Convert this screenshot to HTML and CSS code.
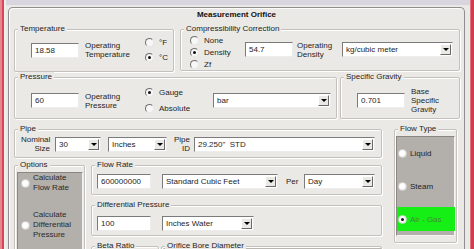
FILE: index.html
```html
<!DOCTYPE html>
<html lang="en">
<head>
  <meta charset="UTF-8">
  <title>Measurement Orifice</title>
  <link rel="stylesheet" href="styles.css">
</head>
<body>

  <div class="screen">
    <div class="edge-l"></div>

    <div class="middle">
      <div class="strip"></div>

      <div class="frame">
        <div class="title">Measurement Orifice</div>

        <div class="row row1">
          <div class="group g-temp">
            <div class="cap">Temperature</div>
            <div class="body">
              <div class="inp w48">18.58</div>
              <div class="desc d-temp">Operating<br>Temperature</div>
              <div class="radios r15">
                <div class="radio"><span class="rb"></span>°F</div>
                <div class="radio"><span class="rb on"></span>°C</div>
              </div>
            </div>
          </div>

          <div class="group g-comp">
            <div class="cap">Compressibility Correction</div>
            <div class="body">
              <div class="radios r12">
                <div class="radio"><span class="rb"></span>None</div>
                <div class="radio"><span class="rb on"></span>Density</div>
                <div class="radio"><span class="rb"></span>Zf</div>
              </div>
              <div class="fields">
                <div class="inp w48">54.7</div>
                <div class="desc d-dens">Operating<br>Density</div>
                <div class="sel s-dens"><span class="val">kg/cubic meter</span><span class="btn"></span></div>
              </div>
            </div>
          </div>
        </div>

        <div class="row row2">
          <div class="group g-pres">
            <div class="cap">Pressure</div>
            <div class="body">
              <div class="inp w48">60</div>
              <div class="desc d-pres">Operating<br>Pressure</div>
              <div class="radios r16">
                <div class="radio"><span class="rb on"></span>Gauge</div>
                <div class="radio"><span class="rb"></span>Absolute</div>
              </div>
              <div class="sel s-bar"><span class="val">bar</span><span class="btn"></span></div>
            </div>
          </div>

          <div class="group g-sg">
            <div class="cap">Specific Gravity</div>
            <div class="body">
              <div class="inp w48">0.701</div>
              <div class="desc d-sg">Base<br>Specific<br>Gravity</div>
            </div>
          </div>
        </div>

        <div class="row row3">
          <div class="left-col">
            <div class="group g-pipe">
              <div class="cap">Pipe</div>
              <div class="body">
                <div class="desc-r d-size">Nominal<br>Size</div>
                <div class="sel s-size"><span class="val">30</span><span class="btn"></span></div>
                <div class="sel s-unit"><span class="val">Inches</span><span class="btn"></span></div>
                <div class="desc-r d-id">Pipe<br>ID</div>
                <div class="sel s-id"><span class="val">29.250&quot;  STD</span><span class="btn"></span></div>
              </div>
            </div>

            <div class="lower">
              <div class="group g-opt">
                <div class="cap">Options</div>
                <div class="panel opt-panel">
                  <div class="opt-item"><span class="rb ball"></span><span>Calculate<br>Flow Rate</span></div>
                  <div class="opt-item opt-2"><span class="rb ball"></span><span>Calculate<br>Differential<br>Pressure</span></div>
                </div>
              </div>

              <div class="right-col">
                <div class="group g-rate">
                  <div class="cap">Flow Rate</div>
                  <div class="body">
                    <div class="inp w54">600000000</div>
                    <div class="sel s-std"><span class="val">Standard Cubic Feet</span><span class="btn"></span></div>
                    <div class="per">Per</div>
                    <div class="sel s-day"><span class="val">Day</span><span class="btn"></span></div>
                  </div>
                </div>

                <div class="group g-diff">
                  <div class="cap">Differential Pressure</div>
                  <div class="body">
                    <div class="inp w54">100</div>
                    <div class="sel s-water"><span class="val">Inches Water</span><span class="btn"></span></div>
                  </div>
                </div>

                <div class="row row4">
                  <div class="group g-beta">
                    <div class="cap">Beta Ratio</div>
                  </div>
                  <div class="group g-bore">
                    <div class="cap">Orifice Bore Diameter</div>
                  </div>
                </div>
              </div>
            </div>
          </div>

          <div class="group g-flow">
            <div class="cap">Flow Type</div>
            <div class="panel ft-panel">
              <div class="ft-item ft-1"><span class="rb ball"></span>Liquid</div>
              <div class="ft-item ft-2"><span class="rb ball"></span>Steam</div>
              <div class="ft-item ft-gas"><span class="rb ball on"></span>Air - Gas</div>
            </div>
          </div>
        </div>
      </div>
    </div>

    <div class="edge-r"></div>
  </div>

</body>
</html>
```

FILE: styles.css
```css
body {
  margin: 0;
  font-family: "Liberation Sans", Arial, sans-serif;
  font-size: 8px;
  color: #1e1e1e;
  background: #ebe9e5;
}
.screen {
  display: flex;
  width: 474px;
  height: 249px;
  overflow: hidden;
}
.edge-l {
  width: 6px;
  flex: none;
  background: linear-gradient(90deg, #e8868f 0 2px, #d6475a 2px 4px, #f4eeee 4px 6px);
}
.edge-r {
  width: 4px;
  flex: none;
  background: linear-gradient(90deg, #e3707d 0 1px, #d23d4e 1px);
}
.middle {
  width: 464px;
  flex: none;
}
.strip {
  height: 5px;
  background: #d8d5df;
}
.frame {
  margin: 2px 5px 0 2px;
  height: 260px;
  border: 1px solid #8e8e8e;
  border-bottom: none;
  border-radius: 5px 5px 0 0;
  box-shadow: inset 1px 1px 0 #fbfbfb;
  padding-left: 5px;
}
.title {
  margin-top: 2px;
  margin-left: -5px;
  line-height: 10px;
  text-align: center;
  font-weight: bold;
  color: #111;
}
.row {
  display: flex;
  align-items: flex-start;
}
.row1 { margin-top: 9px; }
.row2 { margin-top: 5px; }
.row3 { margin-top: 10px; }
.row4 { margin-top: 10px; }

/* group boxes */
.group {
  box-sizing: border-box;
  border: 1px solid #c4c1bc;
  border-radius: 2px;
  box-shadow: inset 1px 1px 0 #fff, 1px 1px 0 #fff;
  flex: none;
}
.cap {
  display: table;
  margin: -6px 0 0 3px;
  padding: 0 2px;
  line-height: 10px;
  background: #ebe9e5;
  white-space: nowrap;
}
.body {
  display: flex;
  align-items: center;
}

.g-temp { width: 160px; height: 43px; }
.g-temp .body { margin-top: 2px; height: 28px; padding-left: 16px; }
.g-comp { width: 280px; height: 42px; margin-left: 6px; }
.g-comp .body { align-items: flex-start; padding-left: 9px; }
.g-comp .radios { width: 55px; }
.fields {
  display: flex;
  align-items: center;
  height: 15px;
  margin-top: 8px;
}
.g-pres { width: 323px; height: 42px; }
.g-pres .body { margin-top: 1px; height: 35px; padding-left: 16px; }
.g-pres .radios { width: 68px; }
.g-sg { width: 120px; height: 42px; margin-left: 3px; }
.g-sg .body { margin-top: 1px; height: 35px; padding-left: 16px; }

.left-col { width: 368px; flex: none; }
.g-pipe { width: 368px; height: 29px; }
.g-pipe .body { height: 20px; padding-left: 6px; }
.lower {
  display: flex;
  align-items: flex-start;
  margin-top: 7px;
}
.g-opt { width: 71px; height: 100px; }
.right-col { width: 291px; margin-left: 6px; flex: none; }
.g-rate { width: 291px; height: 30px; }
.g-rate .body { margin-top: 4px; height: 15px; padding-left: 5px; }
.g-diff { width: 291px; height: 31px; margin-top: 10px; }
.g-diff .body { margin-top: 6px; height: 15px; padding-left: 5px; }
.g-beta { width: 68px; height: 40px; }
.g-bore {
  width: 221px;
  height: 40px;
  margin-left: 2px;
  background: #b9b6b2;
}
.g-flow { width: 63px; height: 114px; margin-left: 12px; }

/* text blocks */
.desc {
  line-height: 9px;
  margin-left: 6px;
  flex: none;
}
.d-temp { width: 56px; }
.d-dens { width: 45px; margin-left: 4px; }
.d-pres { width: 56px; }
.desc-r {
  line-height: 9px;
  text-align: right;
  flex: none;
}
.d-size { width: 29px; margin-right: 5px; }
.d-id { width: 17px; margin: 0 4px 0 6px; }
.per { width: 18px; margin-left: 8px; }

/* inputs and selects */
.inp {
  box-sizing: border-box;
  height: 15px;
  padding-left: 3px;
  line-height: 13px;
  background: #fff;
  border: 1px solid;
  border-color: #7b7b7b #ececec #ececec #7b7b7b;
  flex: none;
}
.w48 { width: 48px; }
.w54 { width: 54px; }
.sel {
  box-sizing: border-box;
  display: flex;
  height: 15px;
  background: #fff;
  border: 1px solid;
  border-color: #7b7b7b #ececec #ececec #7b7b7b;
  flex: none;
}
.sel .val {
  flex: 1;
  padding-left: 3px;
  line-height: 13px;
  white-space: pre;
  overflow: hidden;
}
.sel .btn {
  box-sizing: border-box;
  width: 11px;
  margin: 1px;
  display: flex;
  align-items: center;
  justify-content: center;
  background: #ebe9e5;
  border: 1px solid;
  border-color: #fff #6a6a6a #6a6a6a #fff;
}
.sel .btn::after {
  content: "";
  border-left: 3px solid transparent;
  border-right: 3px solid transparent;
  border-top: 3px solid #000;
}
.s-dens { width: 111px; }
.s-bar { width: 118px; }
.s-size { width: 46px; }
.s-unit { width: 59px; margin-left: 7px; }
.s-id { width: 181px; }
.s-std { width: 116px; margin-left: 11px; }
.s-day { width: 71px; }
.s-water { width: 92px; margin-left: 11px; }

/* radios */
.radios {
  display: flex;
  flex-direction: column;
  flex: none;
}
.radio {
  display: flex;
  align-items: center;
  white-space: nowrap;
}
.r12 .radio { height: 12px; }
.r15 .radio { height: 15px; }
.r16 .radio { height: 16px; }
.r15, .r16 { margin-left: 4px; }
.rb {
  position: relative;
  box-sizing: border-box;
  width: 9px;
  height: 9px;
  margin-right: 5px;
  border-radius: 50%;
  border: 1px solid;
  border-color: #6f6f6f #e6e6e6 #e6e6e6 #6f6f6f;
  background: #f7f7f7;
  flex: none;
}
.rb.on::after {
  content: "";
  position: absolute;
  left: 2px;
  top: 2px;
  width: 3px;
  height: 3px;
  border-radius: 50%;
  background: #111;
}
.rb.ball {
  border-color: #d6d6d6;
  background: radial-gradient(circle at 40% 40%, #fff 0 40%, #dcdcdc 100%);
  margin-right: 3px;
}

/* grey option panels */
.panel {
  box-sizing: border-box;
  background: #b3afab;
  border: 1px solid;
  border-color: #8a8783 #f4f4f4 #f4f4f4 #8a8783;
}
.opt-panel {
  width: 66px;
  height: 90px;
  margin: 2px 0 0 2px;
  color: #2a2a2a;
}
.opt-item {
  display: flex;
  align-items: center;
  line-height: 10px;
  padding-left: 3px;
}
.opt-2 { margin-top: 17px; }
.ft-panel {
  width: 59px;
  height: 100px;
  margin: 2px 0 0 1px;
}
.ft-item {
  display: flex;
  align-items: center;
  padding-left: 1px;
}
.ft-1 { height: 33px; }
.ft-2 { height: 32px; }
.ft-gas {
  height: 24px;
  margin: 5px -1px 0 0;
  background: #16ef16;
  color: #3f8a3f;
}
```
